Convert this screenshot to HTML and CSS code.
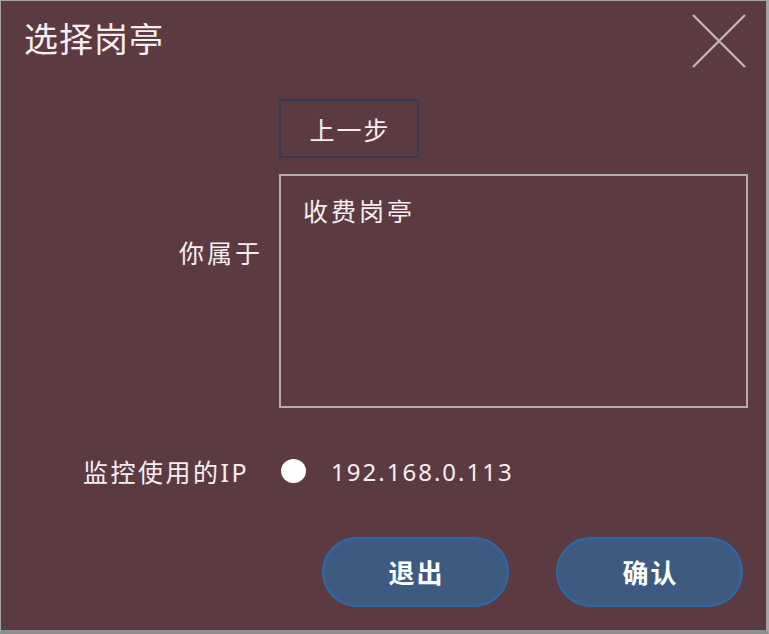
FILE: index.html
```html
<!DOCTYPE html>
<html lang="zh-CN">
<head>
  <meta charset="UTF-8">
  <meta name="viewport" content="width=device-width, initial-scale=1.0">
  <title>选择岗亭</title>
  <link rel="stylesheet" href="styles.css">
</head>
<body>
  <div class="dialog">
    <div class="head">
      <h1 class="title">选择岗亭</h1>
      <button class="close" aria-label="关闭">
        <svg width="56" height="56" viewBox="0 0 56 56">
          <path d="M2 2 L54 54 M54 2 L2 54" stroke="#bdb4b8" stroke-width="2.4" fill="none"/>
        </svg>
      </button>
    </div>

    <div class="form">
      <div></div>
      <div><button class="prev">上一步</button></div>
      <div class="label">你属于</div>
      <div class="list">
        <div class="list-item">收费岗亭</div>
      </div>
    </div>

    <div class="ip-row">
      <span class="ip-label">监控使用的IP</span>
      <span class="radio"></span>
      <span class="ip">192.168.0.113</span>
    </div>

    <div class="actions">
      <button class="btn">退出</button>
      <button class="btn">确认</button>
    </div>
  </div>
</body>
</html>
```

FILE: styles.css
```css
* {
  margin: 0;
  padding: 0;
  box-sizing: border-box;
  font-family: "Noto Sans", "Noto Sans CJK SC", sans-serif;
}

body {
  background: #ffffff;
}

.dialog {
  width: 769px;
  height: 634px;
  background: #5b3b41;
  border: 1px solid #a4a4a4;
  border-bottom: 4px solid #8e8e8e;
  border-right: 3px solid #a4a4a4;
  color: #f5eff0;
  display: flex;
  flex-direction: column;
}

.head {
  height: 98px;
  display: flex;
  justify-content: space-between;
  align-items: flex-start;
  padding: 12px 19px 0 23px;
}

.title {
  font-size: 34px;
  font-weight: normal;
  line-height: 40px;
  letter-spacing: 1px;
  margin-top: 6px;
}

.close {
  background: none;
  border: none;
  width: 56px;
  height: 56px;
  cursor: pointer;
}

.close svg {
  display: block;
}

.form {
  display: grid;
  grid-template-columns: 259px 469px;
  column-gap: 19px;
  row-gap: 16px;
}

.prev {
  width: 140px;
  height: 59px;
  background: transparent;
  border: 2px solid #313d57;
  color: #f5eff0;
  font-size: 25px;
  letter-spacing: 2px;
  padding-left: 2px;
}

.label {
  justify-self: end;
  font-size: 25px;
  letter-spacing: 3px;
  margin-right: -3px;
  padding-top: 60px;
}

.list {
  height: 234px;
  border: 2px solid #b3acb0;
  padding: 18px 22px;
}

.list-item {
  font-size: 25px;
  letter-spacing: 3px;
  line-height: 34px;
}

.ip-row {
  display: flex;
  align-items: center;
  height: 40px;
  margin-top: 43px;
  padding-left: 82px;
}

.ip-label {
  font-size: 25px;
  letter-spacing: 2.5px;
}

.radio {
  width: 25px;
  height: 24px;
  border-radius: 50%;
  background: #ffffff;
  margin-left: 32px;
}

.ip {
  font-size: 24px;
  letter-spacing: 2px;
  margin-left: 25px;
}

.actions {
  display: flex;
  justify-content: flex-end;
  gap: 47px;
  margin-top: 46px;
  padding-right: 23px;
}

.btn {
  width: 187px;
  height: 70px;
  border-radius: 35px;
  background: #3e5a80;
  border: 2px solid #2b6aa8;
  color: #ffffff;
  font-size: 26px;
  font-weight: bold;
  letter-spacing: 2px;
  padding-left: 2px;
}
```
